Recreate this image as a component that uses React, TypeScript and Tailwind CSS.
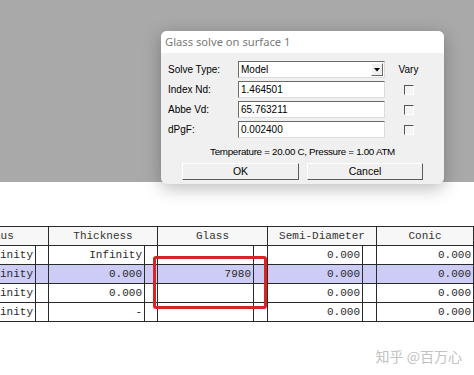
import React from "react";

const mono = { fontFamily: '"Liberation Mono", "Courier New", monospace' };
const sans = { fontFamily: '"Liberation Sans", Arial, sans-serif' };

type Row = {
  radius: string;
  thickness: string;
  glass: string;
  semi: string;
  conic: string;
  active?: boolean;
};

const rows: Row[] = [
  { radius: "Infinity", thickness: "Infinity", glass: "", semi: "0.000", conic: "0.000" },
  { radius: "Infinity", thickness: "0.000", glass: "7980", semi: "0.000", conic: "0.000", active: true },
  { radius: "Infinity", thickness: "0.000", glass: "", semi: "0.000", conic: "0.000" },
  { radius: "Infinity", thickness: "-", glass: "", semi: "0.000", conic: "0.000" },
];

const headers = [
  { label: "Radius", span: "col-span-2" },
  { label: "Thickness", span: "col-span-2" },
  { label: "Glass", span: "col-span-2" },
  { label: "Semi-Diameter", span: "col-span-2" },
  { label: "Conic", span: "col-span-1" },
];

function Field({ value, select }: { value: string; select?: boolean }) {
  return (
    <div className="flex h-[17px] w-[147px] items-center border border-t-[#6a6a6a] border-l-[#6a6a6a] border-b-[#dcdcdc] border-r-[#dcdcdc] bg-white">
      <span className="flex-1 pl-[2px] text-[10px] text-black">{value}</span>
      {select && (
        <div className="mr-px flex h-[13px] w-[12px] items-center justify-center border border-t-white border-l-white border-b-[#6a6a6a] border-r-[#6a6a6a] bg-[#f0f0f0]">
          <svg width="6" height="4" viewBox="0 0 6 4">
            <path d="M0 0h6L3 3.5z" fill="#000" />
          </svg>
        </div>
      )}
    </div>
  );
}

function Check() {
  return (
    <div className="h-[10px] w-[10px] border border-t-[#555] border-l-[#555] border-b-white border-r-white bg-[#f4f4f4]" />
  );
}

function Button({ label }: { label: string }) {
  return (
    <button className="flex h-[17px] w-full items-center justify-center border border-t-white border-l-white border-b-[#5a5a5a] border-r-[#5a5a5a] bg-[#f0f0f0] text-[10.5px] text-black">
      {label}
    </button>
  );
}

function Dialog() {
  const labels = ["Solve Type:", "Index Nd:", "Abbe Vd:", "dPgF:"];
  const values = ["Model", "1.464501", "65.763211", "0.002400"];
  return (
    <div
      className="absolute left-[161px] top-[31px] flex h-[153px] w-[283px] flex-col overflow-hidden rounded-[6px] bg-[#f0f0f0] shadow-[0_4px_18px_rgba(0,0,0,0.28)]"
      style={sans}
    >
      <div
        className="flex h-[22px] items-center bg-white pl-[4px] text-[11.2px] text-[#7a7a7a]"
        style={{ fontFamily: '"Noto Sans", "Open Sans", sans-serif' }}
      >
        Glass solve on surface 1
      </div>
      <div className="flex flex-col gap-[3px] pt-[8px]">
        {labels.map((l, i) => (
          <div key={l} className="flex h-[17px] items-center">
            <span className="w-[77px] pl-[7px] text-[10px] text-black">{l}</span>
            <Field value={values[i]} select={i === 0} />
            <div className="flex flex-1 justify-center pr-[12px]">
              {i === 0 ? (
                <span className="text-[10px] text-black">Vary</span>
              ) : (
                <Check />
              )}
            </div>
          </div>
        ))}
      </div>
      <div className="mt-[7px] text-center text-[9.8px] leading-[14px] tracking-[-0.3px] text-black">
        Temperature = 20.00 C, Pressure = 1.00 ATM
      </div>
      <div className="mt-[4px] flex justify-center gap-[8px]">
        <div className="w-[117px]">
          <Button label="OK" />
        </div>
        <div className="w-[116px]">
          <Button label="Cancel" />
        </div>
      </div>
    </div>
  );
}

export default function App() {
  const cell = "flex h-[18px] items-center justify-end pr-[2px] text-[11px] text-[#2a2a2a]";
  return (
    <div className="relative h-[375px] w-[474px] overflow-hidden bg-white">
      {/* Window backdrop */}
      <div className="h-[182px] bg-[#a9a9a9]" />

      {/* Lens data table */}
      <div className="mt-[44px] ml-[-60px] w-[534px]" style={mono}>
        <div className="grid grid-cols-[95px_12px_95px_12px_95px_13px_94px_13px_96px] gap-px bg-[#2a2a2a] py-px pr-px">
          {headers.map((h) => (
            <div
              key={h.label}
              className={`${h.span} flex h-[18px] items-center justify-center bg-[#f7f7f7] text-[11px] text-[#333]`}
            >
              {h.label}
            </div>
          ))}
          {rows.map((r, i) => {
            const bg = r.active ? "bg-[#ccccf6]" : "bg-white";
            return (
              <React.Fragment key={i}>
                <div className={`${cell} ${bg}`}>{r.radius}</div>
                <div className={bg} />
                <div className={`${cell} ${bg}`}>{r.thickness}</div>
                <div className={bg} />
                <div className={`${cell} ${bg}`}>{r.glass}</div>
                <div className={bg} />
                <div className={`${cell} ${bg}`}>{r.semi}</div>
                <div className={bg} />
                <div className={`${cell} ${bg}`}>{r.conic}</div>
              </React.Fragment>
            );
          })}
        </div>
      </div>

      {/* Watermark */}
      <div
        className="mt-[25px] pr-[12px] text-right text-[14px] leading-[18px] text-[#c2c2c2]"
        style={{ fontFamily: '"Noto Sans CJK SC", "Noto Sans", sans-serif' }}
      >
        知乎 @百万心
      </div>

      {/* Highlight box */}
      <div className="absolute left-[153px] top-[256px] h-[53px] w-[114px] rounded-[3px] border-[3px] border-[#d82424]" />

      <Dialog />
    </div>
  );
}
